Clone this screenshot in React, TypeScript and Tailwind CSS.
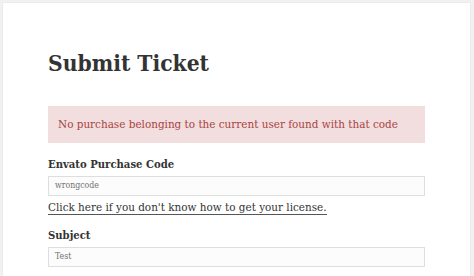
import React from "react";

const Field = ({ label, value }: { label: string; value: string }) => {
  return (
    <div>
      <label className="block text-[11.2px] leading-[15px] font-bold text-[#333]">{label}</label>
      <div className="mt-[4px] h-[20px] border border-[#dedede] bg-[#fcfcfc] flex items-center px-[6px] text-[8.7px] text-[#707070]">
        {value}
      </div>
    </div>
  );
};

const App = () => {
  return (
    <div className="min-h-screen bg-[#f1f1f1] pt-[2px] pl-[2px] pr-[3px] overflow-hidden">
      <div className="bg-white border-l border-t border-r border-[#ebebeb] h-[280px] px-[45px] pt-[46px] font-['DejaVu_Serif_Condensed','DejaVu_Serif',serif]">
        <h1 className="text-[22.6px] leading-[28px] font-bold text-[#333]">Submit Ticket</h1>

        <div className="mt-[29px] h-[37px] bg-[#f2dede] px-[10px] pt-[1px] flex items-center text-[11.6px] text-[#a94442]">
          No purchase belonging to the current user found with that code
        </div>

        <div className="mt-[14px]">
          <Field label="Envato Purchase Code" value="wrongcode" />
        </div>

        <div className="mt-[4px] text-[11.6px] leading-[15px] text-[#333]">
          <a href="#" className="border-b border-[#555]">
            Click here if you don't know how to get your license.
          </a>
        </div>

        <div className="mt-[13px]">
          <Field label="Subject" value="Test" />
        </div>
      </div>
    </div>
  );
};

export default App;
